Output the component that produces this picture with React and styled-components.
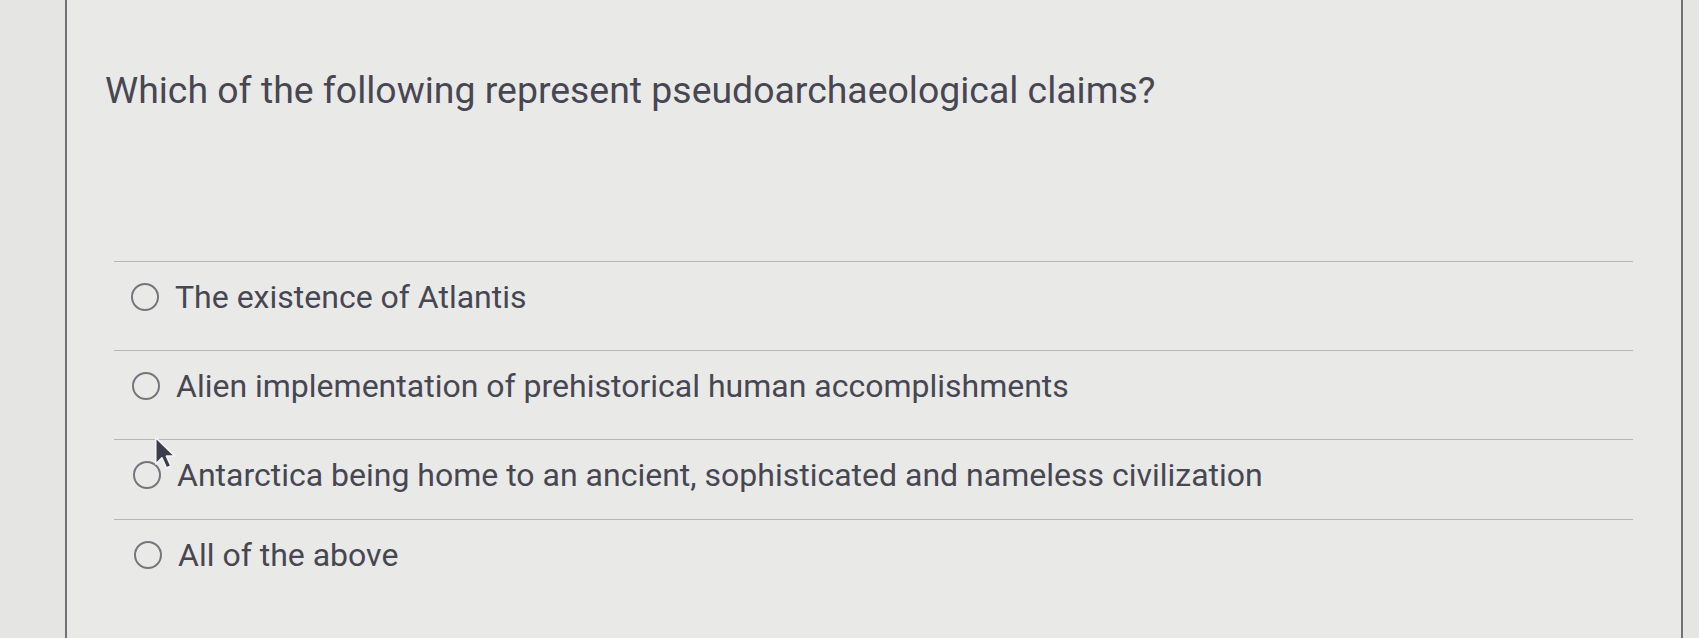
import React from 'react';
import styled, { createGlobalStyle } from 'styled-components';

const GlobalStyle = createGlobalStyle`
  html, body {
    margin: 0;
    padding: 0;
    background: #e4e4e2;
  }
  body {
    font-family: Roboto, "Liberation Sans", Arial, sans-serif;
  }
`;

const Page = styled.div`
  position: relative;
  display: flex;
  width: 1699px;
  height: 638px;
  padding-left: 65px;
  padding-right: 16px;
  box-sizing: border-box;
  background: #e5e5e3;
  overflow: hidden;
`;

const Card = styled.div`
  flex: 1;
  display: flex;
  flex-direction: column;
  background: #e9e9e7;
  border-left: 2px solid #707076;
  border-right: 2px solid #707076;
  padding: 68px 48px 0 38px;
`;

const Question = styled.h1`
  margin: 0;
  font-size: 37.4px;
  line-height: 44px;
  font-weight: 400;
  color: #474753;
`;

const Options = styled.ul`
  list-style: none;
  margin: 149px 0 0 9px;
  padding: 0;
`;

const Option = styled.li`
  display: flex;
  align-items: center;
  gap: 16px;
  padding: ${(props) => (props.$short ? '17px 0 26px' : '17px 0 35px')};
  padding-left: ${(props) => 17 + props.$shift}px;
  border-top: 1.5px solid #b6b6b8;
  font-size: 32px;
  line-height: 36px;
  color: #474753;
`;

const Radio = styled.span`
  flex: none;
  width: 24px;
  height: 24px;
  border: 2px solid #75757c;
  border-radius: 50%;
`;

const Cursor = styled.svg`
  position: absolute;
  left: 154px;
  top: 436px;
  width: 27px;
  height: 38px;
`;

const options = [
  'The existence of Atlantis',
  'Alien implementation of prehistorical human accomplishments',
  'Antarctica being home to an ancient, sophisticated and nameless civilization',
  'All of the above',
];

export default function App() {
  return (
    <>
      <GlobalStyle />
      <Page>
        <Card>
          <Question>Which of the following represent pseudoarchaeological claims?</Question>
          <Options>
            {options.map((text, i) => (
              <Option key={text} $shift={i} $short={i === 2}>
                <Radio />
                {text}
              </Option>
            ))}
          </Options>
        </Card>
        <Cursor viewBox="0 0 24 34">
          <path
            d="M1.5 1.5 L1.5 25 L7 19.5 L11 28.5 L15 26.8 L11 18 L18.5 18 Z"
            fill="#3b3d4c"
            stroke="#f4f4f4"
            strokeWidth="1.4"
            strokeLinejoin="round"
          />
        </Cursor>
      </Page>
    </>
  );
}
